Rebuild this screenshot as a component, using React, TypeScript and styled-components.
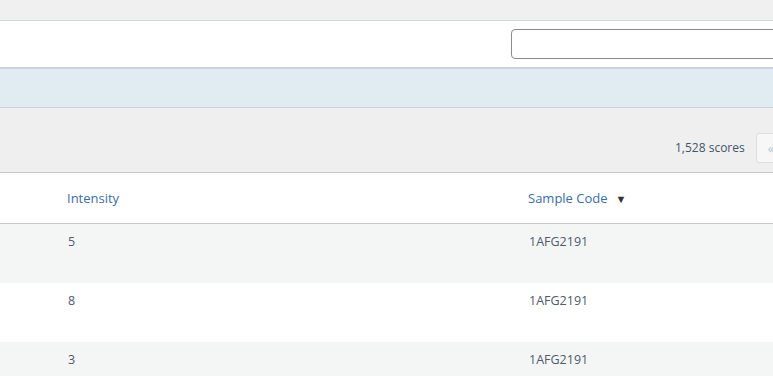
import React from "react";
import styled, { createGlobalStyle } from "styled-components";

const Global = createGlobalStyle`
  html, body { margin: 0; padding: 0; overflow: hidden; background: #f0f0f0; }
  body { font-family: "Open Sans", "Liberation Sans", sans-serif; }
`;

const Page = styled.div`
  width: 1000px;
  display: flex;
  flex-direction: column;
`;

const TopStrip = styled.div`
  height: 20px;
  background: #f0f0f0;
  border-bottom: 1px solid #cfd5db;
`;

const SearchRow = styled.div`
  height: 46px;
  background: #ffffff;
  display: flex;
  align-items: flex-start;
  justify-content: flex-end;
  padding-right: 20px;
`;

const SearchInput = styled.input`
  width: 469px;
  height: 30px;
  box-sizing: border-box;
  border: 1px solid #8c8c8c;
  border-radius: 4px;
  background: #fff;
  margin-top: 8px;
`;

const InfoBand = styled.div`
  height: 38px;
  background: #e0ebf2;
  border-top: 2px solid #c7d4de;
  border-bottom: 1px solid #c7d4de;
`;

const Toolbar = styled.div`
  height: 65px;
  box-sizing: border-box;
  background: #efefef;
  border-bottom: 1px solid #c8c8c8;
  display: flex;
  align-items: flex-start;
  padding: 25px 0 0 675px;
  gap: 11px;
`;

const Count = styled.span`
  font-size: 12px;
  line-height: 30px;
  color: #44546a;
`;

const Pager = styled.div`
  display: flex;
`;

const PageButton = styled.button`
  height: 30px;
  min-width: 30px;
  box-sizing: border-box;
  border: 1px solid #dddddd;
  border-radius: 3px;
  background: #f7f7f7;
  color: #b8c4cc;
  font-family: inherit;
  font-size: 12px;
  padding: 0 8px;
`;

const Table = styled.div`
  display: grid;
  grid-template-columns: 59px 461px 1fr;
  background: #fff;
`;

const HeadCell = styled.div`
  height: 50px;
  border-bottom: 1px solid #c8c8c8;
  display: flex;
  align-items: center;
  padding: 0 8px;
  font-size: 13px;
  color: #3a6ea5;
  gap: 8px;
`;

const Cell = styled.div<{ $striped: boolean }>`
  height: 59px;
  box-sizing: border-box;
  padding: 9px 8px 0 9px;
  font-size: 12.5px;
  line-height: 18px;
  color: #505a6a;
  background: ${(p) => (p.$striped ? "#f4f6f6" : "#ffffff")};
`;

const Caret = styled.span`
  font-size: 11px;
  color: #333;
`;

const rows = [
  { intensity: "5", code: "1AFG2191" },
  { intensity: "8", code: "1AFG2191" },
  { intensity: "3", code: "1AFG2191" },
];

export default function App() {
  return (
    <Page>
      <Global />
      <TopStrip />
      <SearchRow>
        <SearchInput type="text" />
      </SearchRow>
      <InfoBand />
      <Toolbar>
        <Count>1,528 scores</Count>
        <Pager>
          <PageButton>«</PageButton>
        </Pager>
      </Toolbar>
      <Table>
        <HeadCell />
        <HeadCell>Intensity</HeadCell>
        <HeadCell>
          Sample Code <Caret>▼</Caret>
        </HeadCell>
        {rows.map((r, i) => (
          <React.Fragment key={i}>
            <Cell $striped={i % 2 === 0} />
            <Cell $striped={i % 2 === 0}>{r.intensity}</Cell>
            <Cell $striped={i % 2 === 0}>{r.code}</Cell>
          </React.Fragment>
        ))}
      </Table>
    </Page>
  );
}
